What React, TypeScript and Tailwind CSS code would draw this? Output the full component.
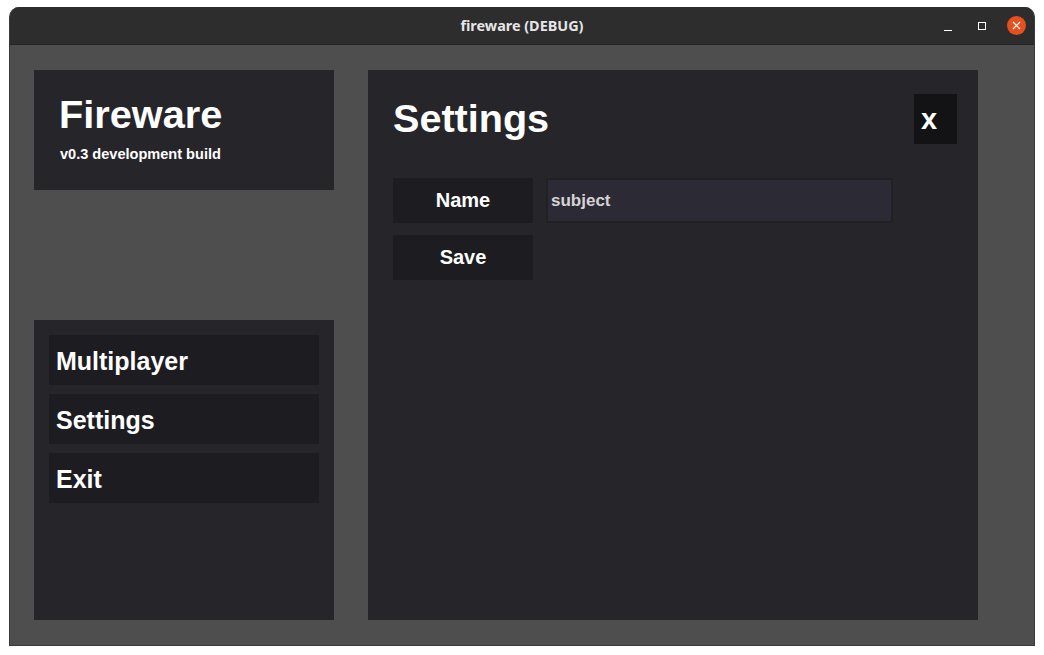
import React from 'react';

const MenuItem: React.FC<{ label: string }> = ({ label }) => (
    <div className="h-[50px] bg-[#1d1d21] flex items-center pl-[7px] pt-1 text-[25px] font-bold text-white">{label}</div>
);

const FormButton: React.FC<{ label: string }> = ({ label }) => (
    <div className="w-[140px] h-[45px] bg-[#1d1d21] flex items-center justify-center pb-0.5 text-[20px] font-bold text-white">{label}</div>
);

export default function App() {
    return (
        <div className="w-[1044px] h-[655px] bg-white pt-[7px] pl-[9px] font-['Liberation_Sans',sans-serif] overflow-hidden">
            <div className="w-[1026px] h-[639px] flex flex-col rounded-t-[10px] border border-t-0 border-[#3a3a3a] overflow-hidden bg-[#4e4e4e]">
                <div className="h-[38px] shrink-0 bg-[#2d2d2d] border-b border-[#242424] flex items-center relative">
                    <div className="w-full text-center text-[14.4px] font-bold text-[#e6e6e6] font-['Noto_Sans',sans-serif]">fireware (DEBUG)</div>
                    <div className="absolute right-[8px] top-[9px] flex items-center">
                        <div className="w-2 h-px bg-white mr-[26px] mt-[10px]" />
                        <div className="w-2 h-2 border border-white mr-[21px]" />
                        <div className="w-[19px] h-[19px] rounded-full bg-[#e5501e] flex items-center justify-center">
                            <svg width="9" height="9" viewBox="0 0 9 9" fill="none" stroke="white" strokeWidth="1.2">
                                <path d="M1 1l7 7M8 1l-7 7" />
                            </svg>
                        </div>
                    </div>
                </div>
                <div className="flex-1 flex pt-[25px] pl-6">
                    <div className="w-[300px] flex flex-col mr-[34px]">
                        <div className="h-[120px] bg-[#26262a] pl-[25px] pt-[21px] text-white">
                            <div className="text-[39.7px] leading-[46px] font-bold">Fireware</div>
                            <div className="text-[14.55px] leading-4 font-bold mt-[9px] ml-px">v0.3 development build</div>
                        </div>
                        <div className="h-[300px] mt-[130px] bg-[#26262a] p-[15px] flex flex-col gap-[9px]">
                            <MenuItem label="Multiplayer" />
                            <MenuItem label="Settings" />
                            <MenuItem label="Exit" />
                        </div>
                    </div>
                    <div className="w-[610px] h-[550px] bg-[#26262a] pl-[25px] pt-6 pr-[21px]">
                        <div className="flex justify-between items-start h-[84px]">
                            <div className="text-[39.6px] leading-[48px] font-bold text-white">Settings</div>
                            <div className="w-[43px] h-[50px] bg-[#131315] flex items-center pl-[7px] pt-0.5 text-[29px] font-bold text-white">x</div>
                        </div>
                        <div className="flex flex-col gap-3">
                            <div className="flex gap-[13px]">
                                <FormButton label="Name" />
                                <div className="w-[347px] h-[45px] bg-[#2c2b35] border-2 border-[#212125] flex items-center pl-[3px] text-[17px] font-bold text-[#d4d4d4]">subject</div>
                            </div>
                            <FormButton label="Save" />
                        </div>
                    </div>
                </div>
            </div>
        </div>
    );
}
